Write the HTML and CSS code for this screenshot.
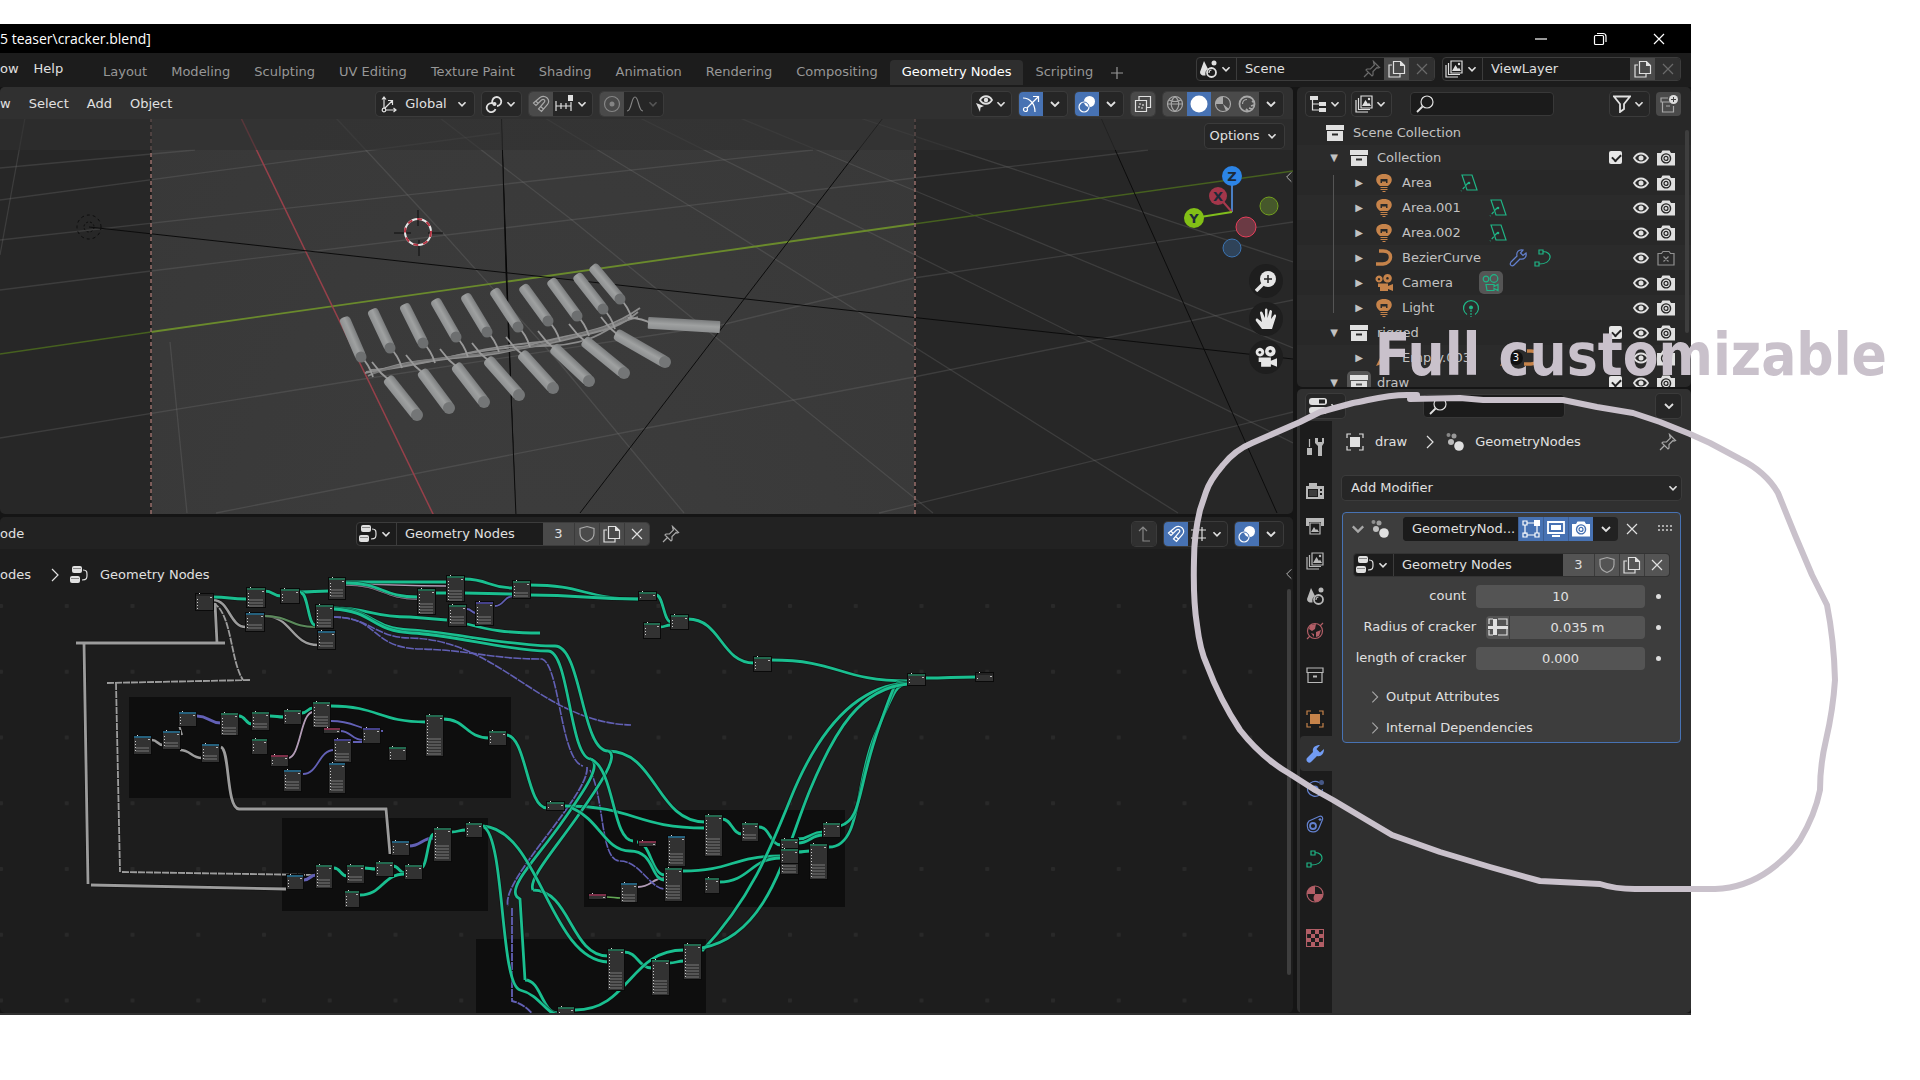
FILE: index.html
```html
<!DOCTYPE html>
<html lang="en">
<head>
<meta charset="UTF-8">
<title>cracker.blend</title>
<link rel="stylesheet" href="styles.css">
</head>
<body>

<!-- icon set -->
<svg class="defs" aria-hidden="true">
  <symbol id="down" viewBox="0 0 18 18"><path d="M5 7l4 4 4-4" class="l2"/></symbol>
  <symbol id="right" viewBox="0 0 18 18"><path d="M6 3l6 6-6 6" class="l"/></symbol>
  <symbol id="left" viewBox="0 0 18 18"><path d="M12 3L6 9l6 6" class="l"/></symbol>
  <symbol id="close" viewBox="0 0 18 18"><path d="M4 4l10 10M14 4L4 14" class="l"/></symbol>
  <symbol id="copy" viewBox="0 0 18 18"><path d="M4 5H1v12h11v-3M5.500 1.500h7l4 4v8h-11z" class="l"/><path d="M12 1v5h5z" class="f"/></symbol>
  <symbol id="pin" viewBox="0 0 18 18"><path d="M10.500 1.500l6 6-1.500.500-1-.500-4 4v3.500l-1 1-6-6 1-1h3.500l4-4-.500-1zM5.500 12.500L1 17" class="l"/></symbol>
  <symbol id="shield" viewBox="0 0 18 18"><path d="M9 1.500L16 3.500v5c0 4-3 6.500-7 8-4-1.500-7-4-7-8v-5z" class="l"/></symbol>
  <symbol id="scene" viewBox="0 0 18 18"><path d="M5 1L1 12c0 3 3 4 5.500 3.500C6 12 7 10 9 9z" class="f"/><circle cx="15" cy="3" r="2.500" class="f"/><circle cx="12.500" cy="12.500" r="4.500" class="l2"/><path d="M10 13c0-2 1-3 2.500-3" class="l"/></symbol>
  <symbol id="layers" viewBox="0 0 18 18"><path d="M1 5v12h12M3.500 3v11.500H15" class="l"/><path d="M6 1h11v12H6z" class="l"/><path d="M7 11l3.500-6 2.500 4 1-1.500L16 11z" class="f"/><circle cx="14" cy="4" r="1.200" class="f"/></symbol>
  <symbol id="axes" viewBox="0 0 18 18"><path d="M4 13V2M2 4.500L4 2l2 2.500M5 15h11M13.500 13l2.500 2-2.500 2M5 13l7-7M8 5.500h4.500V10" class="l"/><circle cx="4" cy="15" r="1.800" class="l"/></symbol>
  <symbol id="pivot" viewBox="0 0 18 18"><path d="M8 8.500a4.500 4.500 0 1 0 2.500 5.500M8 9a4.500 4.500 0 1 1 4 2" class="l2"/><circle cx="9.500" cy="9" r="2" class="f"/></symbol>
  <symbol id="magnet" viewBox="0 0 18 18"><path d="M1.500 8L8 2.500c5-3.500 11 2 7.500 7L9.500 16.500 6.500 14l6-7c1-2-1-3.500-3-2L4 10.500zM3.500 6l3 2.500M8.500 11.500l3 2.500" class="l"/></symbol>
  <symbol id="increment" viewBox="0 0 18 18"><path d="M1 6v10M6 8v6M11 8v6M16 7v9M1 11h15" class="l"/><path d="M13 0h5v6h-5z" class="f"/></symbol>
  <symbol id="proportional" viewBox="0 0 18 18"><circle cx="9" cy="9" r="7.500" class="l"/><circle cx="9" cy="9" r="2.500" class="f"/></symbol>
  <symbol id="falloff" viewBox="0 0 18 18"><path d="M1 16c5 0 4-14 8-14s3 14 8 14" class="l"/></symbol>
  <symbol id="visible" viewBox="0 0 18 18"><path d="M5 5c3-5 9-5 12 0-3 5-9 5-12 0z" class="l2"/><circle cx="11" cy="5" r="2.200" class="f"/><path d="M1 8l8 3-3.500 1.500L5 17z" class="f"/></symbol>
  <symbol id="gizmo" viewBox="0 0 18 18"><path d="M1 3c7 0 12 6 12 14M5 13L16 2M11 1.500h5.500V7" class="l"/><circle cx="3.500" cy="14.500" r="2" class="l"/></symbol>
  <symbol id="overlays" viewBox="0 0 18 18"><circle cx="11.500" cy="6.500" r="5.500" class="f"/><circle cx="6" cy="12" r="5" class="l"/><path d="M6 7a5 5 0 0 1 5 5" stroke="#4772b3" fill="none"/></symbol>
  <symbol id="xray" viewBox="0 0 18 18"><path d="M1.500 5.500h11v11h-11zM5 5V1.500h11.500v11H13" class="l"/><path d="M5 9h4v4H5z" class="l" stroke-dasharray="2 2"/></symbol>
  <symbol id="wire" viewBox="0 0 18 18"><circle cx="9" cy="9" r="7.500" class="l"/><path d="M1.500 9h15M9 1.500c-5 4-5 11 0 15M9 1.500c5 4 5 11 0 15M3 5c4 2 8 2 12 0" class="l"/></symbol>
  <symbol id="solid" viewBox="0 0 18 18"><circle cx="9" cy="9" r="8.500" class="f"/></symbol>
  <symbol id="matprev" viewBox="0 0 18 18"><circle cx="9" cy="9" r="7.500" class="l"/><path d="M9 1.500V9l6 5a7.500 7.500 0 0 1-3 2L9 9H1.500C1.500 5 5 1.500 9 1.500z" class="f"/></symbol>
  <symbol id="rendered" viewBox="0 0 18 18"><circle cx="9" cy="9" r="7.500" class="l2"/><path d="M4.500 9c0-3 2-4.500 4.500-4.500" class="l"/><path d="M14 7l1.500-1M13 11l3-1M11 13l3 1M8 14l2 2" class="l2"/></symbol>
  <symbol id="tree" viewBox="0 0 18 18"><path d="M1 1h8v4H1zM10 7h7v4h-7zM10 13h7v4h-7z" class="f"/><path d="M3.500 5v10H10M3.500 9H10" class="l"/></symbol>
  <symbol id="search" viewBox="0 0 18 18"><circle cx="11" cy="7" r="6" class="l"/><path d="M6.500 11.500L1 17" class="l2"/></symbol>
  <symbol id="filter" viewBox="0 0 18 18"><path d="M1 1.500h16L11 9v5l-4 3V9z" class="l2"/></symbol>
  <symbol id="newcol" viewBox="0 0 18 18"><path d="M8 3H1v4h9M2.500 7v10h11v-6M6 11h4" class="l"/><circle cx="13.500" cy="4.500" r="4.500" fill="#ddd"/><path d="M13.500 2v5M11 4.500h5" stroke="#444"/></symbol>
  <symbol id="box" viewBox="0 0 18 18"><path d="M0 1h18v5H0z" class="f"/><path fill-rule="evenodd" d="M1 7h16v10H1zM6 9.500h6v2H6z" class="f"/></symbol>
  <symbol id="boxline" viewBox="0 0 18 18"><path d="M1 2h16v4.500H1zM2 6.500h14V16.500H2z" class="l"/><path d="M7 9.500h4v2H7z" class="f"/></symbol>
  <symbol id="eye" viewBox="0 0 18 18"><path d="M2 9c3.500-6 10.500-6 14 0-3.500 6-10.500 6-14 0z" class="l2"/><circle cx="9" cy="9" r="2.500" class="f"/></symbol>
  <symbol id="cam" viewBox="0 0 18 18"><path fill-rule="evenodd" d="M0 4h4l1.500-2.500h7L14 4h4v12.500H0zM9 4.200a5.200 5.200 0 1 0 .1 0z" class="f"/><circle cx="9" cy="9.400" r="3.200" class="l"/><circle cx="9" cy="9.400" r="1.300" class="f"/></symbol>
  <symbol id="camoff" viewBox="0 0 18 18"><path d="M1 4.500h3.500l1.500-2h6l1.500 2H17v11.500H1zM6.500 7.500l5 5M11.500 7.500l-5 5" class="l"/></symbol>
  <symbol id="bulb" viewBox="0 0 18 18"><path fill-rule="evenodd" d="M9 0c9 0 10 8 4 12H5C-1 8 0 0 9 0zM5.500 5v4H7V7.500h4V9h1.500V5z" class="f"/><path d="M5.500 13.500h7M5.500 15.500h7M7.500 17.500h3" class="l"/></symbol>
  <symbol id="area" viewBox="0 0 18 18"><path d="M2 1h10l5 15H7z" class="l"/><path d="M8 9l-7 8" class="l" stroke-dasharray="3 2"/><circle cx="9" cy="9" r="1.300" class="f"/></symbol>
  <symbol id="curve" viewBox="0 0 18 18"><path d="M4 2h4c10 0 10 12 0 13H1" class="l4"/></symbol>
  <symbol id="curvedata" viewBox="0 0 18 18"><path d="M9 2.500c10 0 10 12.500-4 12.500M5 1h4v4H5zM1 13h4v4H1z" class="l"/></symbol>
  <symbol id="wrench" viewBox="0 0 18 18"><path d="M17 4l-3 2.500L11.500 4 14 1C10 0 7 3 8 7l-6 6c-2 3 1 5 3 3l6-6c4 1 7-2 6-6z" class="l"/></symbol>
  <symbol id="wrenchfill" viewBox="0 0 18 18"><path d="M18 4l-4 3.500L10.500 4 14 0C9 0 6 3 7 7l-6 6c-2 3 2 6 4 4l6-6c4 1 7-2 7-7z" class="f"/></symbol>
  <symbol id="movie" viewBox="0 0 18 18"><path fill-rule="evenodd" d="M4 1.500a3.500 3.500 0 1 0 .1 0zM4 4a1.200 1.200 0 1 1-.1 0zM12.500 0a4.300 4.300 0 1 0 .1 0zM12.500 3a1.300 1.300 0 1 1-.1 0z" class="f"/><path d="M3 9.500h10V12l5-2v7l-5-2v2H5v-4H3z" class="f"/></symbol>
  <symbol id="movieline" viewBox="0 0 18 18"><circle cx="4" cy="5" r="2.800" class="l"/><circle cx="12" cy="4.500" r="3.800" class="l"/><path d="M4 10.500h8v2l4-2v6l-4-2v2H5z" class="l"/></symbol>
  <symbol id="point" viewBox="0 0 18 18"><path d="M5 15.500a7.500 7.500 0 1 1 8 0" class="l"/><path d="M9 11v7" class="l" stroke-dasharray="2 1"/><circle cx="9" cy="8.500" r="2" class="f"/></symbol>
  <symbol id="bone" viewBox="0 0 18 18"><path d="M1 17l4-8 10-8-3 9-8 6z" class="f"/></symbol>
  <symbol id="toggles" viewBox="0 0 18 18"><rect x="0" y="1" width="18" height="7" rx="3" class="f"/><rect x="0" y="10" width="18" height="7" rx="3" class="f"/><path d="M10 2.500h6v4h-6z" fill="#222"/></symbol>
  <symbol id="tools" viewBox="0 0 18 18"><path d="M3.500 1v8" class="l"/><path d="M1 10h5v7H1z" class="f"/><path d="M9 0v5l3 3v10h4V8l2-3V0h-2v4h-4V0z" class="f"/></symbol>
  <symbol id="render" viewBox="0 0 18 18"><path fill-rule="evenodd" d="M0 4h3V1h8v3h7v13H0zM2 7v8h10V7zM14 7h2v2h-2zM14 11h2v2h-2z" class="f"/><path d="M3 9h8M3 11h8M3 13h8" class="l" opacity=".4"/></symbol>
  <symbol id="output" viewBox="0 0 18 18"><path d="M0 1h18v8h-3V5H3v4H0z" class="f"/><path d="M4 6h10v11H4z" class="l"/><path d="M5 15l3-5 2 3 1-1 2 3z" class="f"/></symbol>
  <symbol id="world" viewBox="0 0 18 18"><circle cx="9" cy="9" r="7.500" class="l"/><path d="M4 3l6-1-1 5-3 2-3-2zM10 10l5-2-2 6-3 1zM5 11l3 1v3z" class="f"/><path d="M1 17l3-3M14 4l3-3" class="l"/></symbol>
  <symbol id="object" viewBox="0 0 18 18"><path d="M4 4h10v10H4z" class="f"/><path d="M1 5V1h4M13 1h4v4M17 13v4h-4M5 17H1v-4" class="l"/></symbol>
  <symbol id="particles" viewBox="0 0 18 18"><circle cx="2.500" cy="2" r="2" class="f" opacity=".5"/><circle cx="8" cy="3" r="2.500" class="f" opacity=".6"/><circle cx="5" cy="9" r="3" class="f" opacity=".8"/><circle cx="13" cy="13" r="4.800" class="f"/></symbol>
  <symbol id="physics" viewBox="0 0 18 18"><path d="M13 2.500A7.500 7.500 0 1 0 16.500 9" class="l"/><circle cx="9" cy="9" r="3.500" class="f"/><circle cx="15.500" cy="2.500" r="2.500" class="f" opacity=".6"/></symbol>
  <symbol id="constraint" viewBox="0 0 18 18"><path d="M3 6l10-4.500c3-1 4 1 3.500 3L13 13c-2 5-9 5-11 1-1-3-1-6 1-8z" class="l"/><circle cx="7" cy="11" r="3" class="l2"/><path d="M14 3v3M12.500 4.500h3" class="l"/></symbol>
  <symbol id="material" viewBox="0 0 18 18"><circle cx="9" cy="9" r="8" class="l"/><path d="M9 1v8H1c0-4 4-8 8-8zM9 9h8c0 4-4 8-8 8-2-3-2-5 0-8z" class="f"/></symbol>
  <symbol id="texture" viewBox="0 0 18 18"><path d="M.5.500h17v17H.500z" class="l"/><path d="M1 1h4v4H1zM9 1h4v4H9zM5 5h4v4H5zM13 5h4v4h-4zM1 9h4v4H1zM9 9h4v4H9zM5 13h4v4H5zM13 13h4v4h-4z" class="f"/></symbol>
  <symbol id="nodes" viewBox="0 0 18 18"><rect x="2" y="0" width="10" height="7" rx="2" class="f"/><rect x="0" y="10" width="10" height="7" rx="2" class="f"/><path d="M3 2.500h8M1 12.500h8" stroke="#888"/><path d="M13 4c4 0 4 2 4 5s0 5-5 5" class="l"/></symbol>
  <symbol id="editmode" viewBox="0 0 18 18"><path d="M3 5v9M5 3h7M5 15h8M15 6v7M1 1h4v4H1zM1 13h4v4H1zM13 13h4v4h-4z" class="l"/><path d="M12 0h6v6h-6z" class="f"/></symbol>
  <symbol id="monitor" viewBox="0 0 18 18"><path d="M1 2h16v11H1z" class="l2"/><path d="M4 5h10v5H4zM5 15h8v2H5z" class="f"/></symbol>
  <symbol id="attribute" viewBox="0 0 20 18"><path d="M1 6V1h4M10 1h9v6M19 11v6h-9M5 17H1v-5" class="l"/><path d="M5 1h4v16H5zM0 8h20v3H0z" class="f"/></symbol>
  <symbol id="parent" viewBox="0 0 18 18"><path d="M15 16H8V2M4 6l4-4 4 4" class="l"/></symbol>
  <symbol id="snapgrid" viewBox="0 0 18 18"><path d="M5 2v14M12 2v14M1 5h15M1 13h15" class="l"/></symbol>
  <symbol id="zoom" viewBox="0 0 22 22"><circle cx="13" cy="9" r="8" class="f"/><path d="M8 14l-7 7" class="l4"/><path d="M13 5v8M9 9h8" stroke="#222" stroke-width="1.500"/></symbol>
  <symbol id="hand" viewBox="0 0 22 22"><path d="M7 21L1 13c-1-2 1-3 2-2l4 3-2-9c0-2 2-2 2.500-.5L10 10V2c0-2 2.500-2 2.500 0v8l2-7c.5-2 2.500-1 2.500.5L16 11l3-4c1-1 2.500 0 2 1.500L17 21z" class="f"/></symbol>
</svg>

<div class="app">
  <div class="titlebar">
    <span>5 teaser\cracker.blend]</span>
    <div class="window-buttons">
      <button aria-label="Minimize"><svg class="icon" viewBox="0 0 18 18"><path d="M3 9h12" class="l"/></svg></button>
      <button aria-label="Restore"><svg class="icon" viewBox="0 0 18 18"><rect x="3.500" y="5.500" width="9" height="9" rx="1" class="l"/><path d="M6 3.500h6a3 3 0 0 1 3 3V12" class="l"/></svg></button>
      <button aria-label="Close"><svg class="icon"><use href="#close"/></svg></button>
    </div>
  </div>

  <div class="topbar">
    <nav class="menu"><a href="#">ow</a><a href="#">Help</a></nav>
    <nav class="tabs">
      <a href="#">Layout</a><a href="#">Modeling</a><a href="#">Sculpting</a><a href="#">UV Editing</a><a href="#">Texture Paint</a><a href="#">Shading</a><a href="#">Animation</a><a href="#">Rendering</a><a href="#">Compositing</a><a href="#" class="active">Geometry Nodes</a><a href="#">Scripting</a>
      <button class="add-tab" aria-label="Add workspace"><svg class="icon" viewBox="0 0 18 18"><path d="M9 3v12M3 9h12" class="l"/></svg></button>
    </nav>
    <div class="id-block">
      <button class="pick" aria-label="Browse scene"><svg class="icon"><use href="#scene"/></svg><svg class="arrow"><use href="#down"/></svg></button>
      <input type="text" value="Scene" aria-label="Scene name">
      <button class="sq inside" aria-label="Pin"><svg class="icon dim"><use href="#pin"/></svg></button>
      <button class="sq grey" aria-label="New scene"><svg class="icon"><use href="#copy"/></svg></button>
      <button class="sq dark" aria-label="Unlink scene"><svg class="icon dim"><use href="#close"/></svg></button>
    </div>
    <div class="id-block">
      <button class="pick" aria-label="Browse view layer"><svg class="icon"><use href="#layers"/></svg><svg class="arrow"><use href="#down"/></svg></button>
      <input type="text" value="ViewLayer" aria-label="View layer name">
      <button class="sq grey" aria-label="New view layer"><svg class="icon"><use href="#copy"/></svg></button>
      <button class="sq dark" aria-label="Remove view layer"><svg class="icon dim"><use href="#close"/></svg></button>
    </div>
  </div>

  <div class="workspace">
    <!-- 3D viewport -->
    <section class="viewport">
      <svg class="canvas" id="scene3d" viewBox="0 87 1293 427" preserveAspectRatio="xMinYMin slice">
        <defs>
          <linearGradient id="tube" x1="0" x2="1" y1="0" y2="0"><stop offset="0" stop-color="#8d8f90"/><stop offset=".5" stop-color="#9fa1a1"/><stop offset="1" stop-color="#7b7d7e"/></linearGradient>
          <radialGradient id="back" cx=".5" cy=".5" r=".7"><stop offset="0" stop-color="#3d3d3d"/><stop offset="1" stop-color="#383838"/></radialGradient>
        </defs>
        <rect x="0" y="87" width="2600" height="1200" fill="#272727"/>
        <rect x="151" y="87" width="764" height="1200" fill="url(#back)"/>
        <g class="grid3d">
          <path d="M0 168L195 150M0 200L500 133M0 240L813 150M0 290L151 271L914 178L1148 150M0 438L357 380L721 325L914 278L1293 222M216 513L647 428L914 377L1293 300M879 513L1293 412"/>
          <path d="M336 118L443 233L557 360L684 513M440 118L572 220L740 357L933 513M545 118L713 220L1178 513M640 118L1293 443M740 118L1293 348M860 118L1293 262M170 342L187 513M25 118L0 255"/>
        </g>
        <path d="M0 354L151 332M914 224L1293 171" stroke="#46601f" stroke-width="1.500"/>
        <path d="M151 332L914 224" stroke="#6a8a2c" stroke-width="1.800"/>
        <path d="M226 87L434 516" stroke="#97404a" stroke-width="1.500"/>
        <path d="M89 227L1293 359M501 100L506 272L516 516M883 118L580 513M1101 118L1277 513" stroke="#0c0c0c"/>
        <path d="M151 118V516M915 118V516" stroke="#111"/>
        <path d="M151 118V516M915 118V516" stroke="#d99a94" stroke-dasharray="4 3"/>
        <g fill="none" stroke="#0d0d0d"><circle cx="89" cy="227" r="5" stroke-dasharray="2 2"/><circle cx="89" cy="227" r="12" stroke-dasharray="3 3"/></g>
        <path d="M394 233h17M428 233h15M418 210v16M419 240v16" stroke="#0d0d0d"/>
        <circle cx="418" cy="232" r="13" fill="none" stroke="#e8e8e8" stroke-width="2"/>
        <circle cx="418" cy="232" r="13" fill="none" stroke="#b53342" stroke-width="2" stroke-dasharray="5 5"/>
        <g id="rope" fill="none" stroke="#8c8c8c" stroke-width="1.800">
          <path d="M365 373C430 358 500 355 560 341S620 326 638 312"/>
          <path d="M368 376C410 352 470 364 520 348S600 336 640 308"/>
          <path d="M371 370C420 366 480 346 540 346S610 324 632 316"/>
          <path d="M366 372C440 364 460 350 530 343S600 328 638 317"/>
          <path d="M372 374C430 352 480 360 550 342S600 330 628 318" stroke="#777"/>
          <path d="M628 318q15 0 24 6" stroke="#999"/>
        </g>
        <g id="tubes"></g>
      </svg>
      <header class="bar">
        <nav class="menu"><a href="#">w</a><a href="#">Select</a><a href="#">Add</a><a href="#">Object</a></nav>
        <button class="drop orient"><svg class="icon"><use href="#axes"/></svg><span>Global</span><svg class="arrow"><use href="#down"/></svg></button>
        <button class="drop" aria-label="Pivot"><svg class="icon"><use href="#pivot"/></svg><svg class="arrow"><use href="#down"/></svg></button>
        <div class="set"><button class="sq grey" aria-label="Snap"><svg class="icon soft"><use href="#magnet"/></svg></button><button class="pick" aria-label="Snap to"><svg class="icon"><use href="#increment"/></svg><svg class="arrow"><use href="#down"/></svg></button></div>
        <div class="set faded"><button class="sq grey" aria-label="Proportional"><svg class="icon"><use href="#proportional"/></svg></button><button class="pick" aria-label="Falloff"><svg class="icon"><use href="#falloff"/></svg><svg class="arrow"><use href="#down"/></svg></button></div>
        <div class="push"></div>
        <button class="drop" aria-label="Visibility"><svg class="icon"><use href="#visible"/></svg><svg class="arrow"><use href="#down"/></svg></button>
        <div class="set"><button class="sq on" aria-label="Gizmos"><svg class="icon"><use href="#gizmo"/></svg></button><button class="sq" aria-label="Gizmo options"><svg class="icon"><use href="#down"/></svg></button></div>
        <div class="set"><button class="sq on" aria-label="Overlays"><svg class="icon"><use href="#overlays"/></svg></button><button class="sq" aria-label="Overlay options"><svg class="icon"><use href="#down"/></svg></button></div>
        <div class="set"><button class="sq grey" aria-label="X-ray"><svg class="icon"><use href="#xray"/></svg></button></div>
        <div class="set"><button class="sq grey" aria-label="Wireframe"><svg class="icon soft"><use href="#wire"/></svg></button><button class="sq on" aria-label="Solid"><svg class="icon"><use href="#solid"/></svg></button><button class="sq grey" aria-label="Material preview"><svg class="icon soft"><use href="#matprev"/></svg></button><button class="sq grey" aria-label="Rendered"><svg class="icon soft"><use href="#rendered"/></svg></button><button class="sq" aria-label="Shading options"><svg class="icon"><use href="#down"/></svg></button></div>
      </header>
      <div class="toolrow"><button class="drop options"><span>Options</span><svg class="arrow"><use href="#down"/></svg></button></div>
      <svg class="gizmo" viewBox="0 0 100 100">
        <path d="M50 43V8" stroke="#4a7fc4" stroke-width="2"/><path d="M50 43L36 27" stroke="#a83a4e" stroke-width="2"/><path d="M50 43L12 49" stroke="#80bd1c" stroke-width="2"/>
        <circle cx="50" cy="7" r="10" fill="#2c84e6"/><circle cx="36" cy="27" r="9" fill="#a3364a"/><circle cx="12" cy="49" r="10" fill="#82bf16"/>
        <circle cx="87" cy="37" r="9" fill="#46582b" stroke="#73a01f"/><circle cx="64" cy="58" r="10" fill="#6b3a44" stroke="#e83f5b"/><circle cx="50" cy="79" r="9" fill="#2f4359" stroke="#3d76b5"/>
        <text x="50" y="12">Z</text><text x="36" y="32">X</text><text x="12" y="54">Y</text>
      </svg>
      <div class="nav-buttons">
        <button aria-label="Zoom"><svg><use href="#zoom"/></svg></button>
        <button aria-label="Pan"><svg><use href="#hand"/></svg></button>
        <button aria-label="Camera view"><svg><use href="#movie"/></svg></button>
      </div>
      <svg class="side-toggle"><use href="#left"/></svg>
    </section>

    <!-- geometry node editor -->
    <section class="node-editor">
      <svg class="canvas" id="graph" viewBox="0 517 1293 497" preserveAspectRatio="xMinYMin slice">
        <defs><pattern id="dots" x="-1" y="604" width="65.750" height="65.750" patternUnits="userSpaceOnUse"><rect width="4" height="4" rx="1" fill="#292929"/></pattern></defs>
        <rect x="0" y="517" width="2600" height="1200" fill="#1d1d1d"/>
        <rect x="0" y="560" width="1280" height="900" fill="url(#dots)"/>
        <g id="frames"></g><g id="links" fill="none"></g><g id="node-list"></g>
      </svg>
      <header class="bar">
        <nav class="menu"><a href="#">ode</a></nav>
        <div class="id-block tree">
          <button class="pick" aria-label="Browse node tree"><svg class="icon"><use href="#nodes"/></svg><svg class="arrow"><use href="#down"/></svg></button>
          <input type="text" value="Geometry Nodes" aria-label="Node tree name">
          <button class="users grey">3</button>
          <button class="sq grey" aria-label="Fake user"><svg class="icon soft"><use href="#shield"/></svg></button>
          <button class="sq grey" aria-label="New tree"><svg class="icon"><use href="#copy"/></svg></button>
          <button class="sq grey" aria-label="Unlink tree"><svg class="icon"><use href="#close"/></svg></button>
        </div>
        <button class="sq plain" aria-label="Pin"><svg class="icon soft"><use href="#pin"/></svg></button>
        <div class="push"></div>
        <div class="set faded"><button class="sq dark" aria-label="Parent tree"><svg class="icon"><use href="#parent"/></svg></button></div>
        <div class="set snap"><button class="sq on" aria-label="Snap"><svg class="icon"><use href="#magnet"/></svg></button><button class="pick" aria-label="Snap to"><svg class="icon"><use href="#snapgrid"/></svg><svg class="arrow"><use href="#down"/></svg></button></div>
        <div class="set"><button class="sq on" aria-label="Overlays"><svg class="icon"><use href="#overlays"/></svg></button><button class="sq" aria-label="Overlay options"><svg class="icon"><use href="#down"/></svg></button></div>
      </header>
      <div class="crumbs"><span>odes</span><svg class="icon"><use href="#right"/></svg><svg class="icon"><use href="#nodes"/></svg><span>Geometry Nodes</span></div>
      <svg class="side-toggle"><use href="#left"/></svg>
      <div class="scroll"></div>
    </section>

    <!-- outliner -->
    <section class="outliner">
      <header class="bar">
        <button class="drop" aria-label="Editor type"><svg class="icon"><use href="#tree"/></svg><svg class="arrow"><use href="#down"/></svg></button>
        <button class="drop" aria-label="Display mode"><svg class="icon"><use href="#layers"/></svg><svg class="arrow"><use href="#down"/></svg></button>
        <label class="search"><svg class="icon"><use href="#search"/></svg><input type="text" aria-label="Search outliner"></label>
        <button class="drop" aria-label="Filter"><svg class="icon"><use href="#filter"/></svg><svg class="arrow"><use href="#down"/></svg></button>
        <button class="sq grey" aria-label="New collection"><svg class="icon soft"><use href="#newcol"/></svg></button>
      </header>
      <ul class="rows">
        <li><i class="tri"></i><svg class="icon"><use href="#box"/></svg><span>Scene Collection</span></li>
        <li class="d1"><i class="tri">▼</i><svg class="icon"><use href="#box"/></svg><span>Collection</span><div class="flags"><input type="checkbox" checked aria-label="Enable Collection"><svg class="icon"><use href="#eye"/></svg><svg class="icon"><use href="#cam"/></svg></div></li>
        <li class="d2"><i class="tri">▶</i><svg class="icon orange"><use href="#bulb"/></svg><span>Area</span><svg class="icon green"><use href="#area"/></svg><div class="flags"><svg class="icon"><use href="#eye"/></svg><svg class="icon"><use href="#cam"/></svg></div></li>
        <li class="d2"><i class="tri">▶</i><svg class="icon orange"><use href="#bulb"/></svg><span>Area.001</span><svg class="icon green"><use href="#area"/></svg><div class="flags"><svg class="icon"><use href="#eye"/></svg><svg class="icon"><use href="#cam"/></svg></div></li>
        <li class="d2"><i class="tri">▶</i><svg class="icon orange"><use href="#bulb"/></svg><span>Area.002</span><svg class="icon green"><use href="#area"/></svg><div class="flags"><svg class="icon"><use href="#eye"/></svg><svg class="icon"><use href="#cam"/></svg></div></li>
        <li class="d2"><i class="tri">▶</i><svg class="icon orange"><use href="#curve"/></svg><span>BezierCurve</span><svg class="icon blue"><use href="#wrench"/></svg><svg class="icon green"><use href="#curvedata"/></svg><div class="flags"><svg class="icon"><use href="#eye"/></svg><svg class="icon soft"><use href="#camoff"/></svg></div></li>
        <li class="d2"><i class="tri">▶</i><svg class="icon orange"><use href="#movie"/></svg><span>Camera</span><b class="chip"><svg class="icon green"><use href="#movieline"/></svg></b><div class="flags"><svg class="icon"><use href="#eye"/></svg><svg class="icon"><use href="#cam"/></svg></div></li>
        <li class="d2"><i class="tri">▶</i><svg class="icon orange"><use href="#bulb"/></svg><span>Light</span><svg class="icon green"><use href="#point"/></svg><div class="flags"><svg class="icon"><use href="#eye"/></svg><svg class="icon"><use href="#cam"/></svg></div></li>
        <li class="d1"><i class="tri">▼</i><svg class="icon"><use href="#box"/></svg><span>rigged</span><div class="flags"><input type="checkbox" checked aria-label="Enable rigged"><svg class="icon"><use href="#eye"/></svg><svg class="icon"><use href="#cam"/></svg></div></li>
        <li class="d2"><i class="tri">▶</i><svg class="icon orange"><use href="#bone"/></svg><span>Empty.003</span><svg class="icon orange"><use href="#bone"/></svg><em class="count">3</em><svg class="icon orange"><use href="#curve"/></svg><div class="flags"><svg class="icon"><use href="#eye"/></svg><svg class="icon"><use href="#cam"/></svg></div></li>
        <li class="d1"><i class="tri">▼</i><b class="chip"><svg class="icon"><use href="#box"/></svg></b><span>draw</span><div class="flags"><input type="checkbox" checked aria-label="Enable draw"><svg class="icon"><use href="#eye"/></svg><svg class="icon"><use href="#cam"/></svg></div></li>
      </ul>
      <div class="guide"></div>
      <div class="scroll"></div>
    </section>

    <!-- properties -->
    <section class="properties">
      <header class="bar">
        <button class="drop" aria-label="Editor type"><svg class="icon"><use href="#toggles"/></svg><svg class="arrow"><use href="#down"/></svg></button>
        <label class="search"><svg class="icon"><use href="#search"/></svg><input type="text" aria-label="Search properties"></label>
        <button class="drop small" aria-label="Options"><svg class="icon"><use href="#down"/></svg></button>
      </header>
      <div class="props-body">
        <nav class="side-tabs">
          <a href="#" aria-label="Tool"><svg class="icon"><use href="#tools"/></svg></a>
          <a href="#" class="gap" aria-label="Render"><svg class="icon"><use href="#render"/></svg></a>
          <a href="#" aria-label="Output"><svg class="icon"><use href="#output"/></svg></a>
          <a href="#" aria-label="View layer"><svg class="icon"><use href="#layers"/></svg></a>
          <a href="#" aria-label="Scene"><svg class="icon"><use href="#scene"/></svg></a>
          <a href="#" aria-label="World"><svg class="icon red"><use href="#world"/></svg></a>
          <a href="#" class="gap" aria-label="Collection"><svg class="icon"><use href="#boxline"/></svg></a>
          <a href="#" class="gap" aria-label="Object"><svg class="icon orange"><use href="#object"/></svg></a>
          <a href="#" class="active" aria-label="Modifiers"><svg class="icon"><use href="#wrenchfill"/></svg></a>
          <a href="#" aria-label="Physics"><svg class="icon blue"><use href="#physics"/></svg></a>
          <a href="#" aria-label="Constraints"><svg class="icon blue"><use href="#constraint"/></svg></a>
          <a href="#" aria-label="Data"><svg class="icon green"><use href="#curvedata"/></svg></a>
          <a href="#" aria-label="Material"><svg class="icon red"><use href="#material"/></svg></a>
          <a href="#" class="gap" aria-label="Texture"><svg class="icon red"><use href="#texture"/></svg></a>
        </nav>
        <div class="panel-area">
          <div class="path"><svg class="icon"><use href="#object"/></svg><span>draw</span><svg class="icon"><use href="#right"/></svg><svg class="icon"><use href="#particles"/></svg><span>GeometryNodes</span><svg class="icon soft pin"><use href="#pin"/></svg></div>
          <button class="drop add-modifier"><span>Add Modifier</span><svg class="arrow"><use href="#down"/></svg></button>
          <div class="modifier">
            <div class="mod-head">
              <svg class="icon soft wide"><use href="#down"/></svg><svg class="icon"><use href="#particles"/></svg>
              <div class="mod-name"><input type="text" value="GeometryNod..." aria-label="Modifier name"><button class="sq on" aria-label="Edit mode"><svg class="icon"><use href="#editmode"/></svg></button><button class="sq on" aria-label="Realtime"><svg class="icon"><use href="#monitor"/></svg></button><button class="sq on" aria-label="Render"><svg class="icon"><use href="#cam"/></svg></button><button class="sq" aria-label="More"><svg class="icon"><use href="#down"/></svg></button></div>
              <button class="sq plain" aria-label="Remove modifier"><svg class="icon"><use href="#close"/></svg></button>
              <i class="grip"></i>
            </div>
            <div class="id-block">
              <button class="pick" aria-label="Browse node group"><svg class="icon"><use href="#nodes"/></svg><svg class="arrow"><use href="#down"/></svg></button>
              <input type="text" value="Geometry Nodes" aria-label="Node group name">
              <button class="users grey">3</button>
              <button class="sq grey" aria-label="Fake user"><svg class="icon soft"><use href="#shield"/></svg></button>
              <button class="sq grey" aria-label="New group"><svg class="icon"><use href="#copy"/></svg></button>
              <button class="sq grey" aria-label="Unlink group"><svg class="icon"><use href="#close"/></svg></button>
            </div>
            <div class="prop"><label for="count">count</label><input type="text" id="count" value="10"><i class="dot"></i></div>
            <div class="prop attr"><label for="radius">Radius of cracker</label><button aria-label="Use attribute"><svg><use href="#attribute"/></svg></button><input type="text" id="radius" value="0.035 m"><i class="dot"></i></div>
            <div class="prop"><label for="length">length of cracker</label><input type="text" id="length" value="0.000"><i class="dot"></i></div>
            <button class="sub"><svg class="icon soft"><use href="#right"/></svg>Output Attributes</button>
            <button class="sub"><svg class="icon soft"><use href="#right"/></svg>Internal Dependencies</button>
          </div>
        </div>
      </div>
    </section>
  </div>
</div>

<!-- hand-drawn annotation -->
<svg class="scribble" viewBox="0 0 1920 1080" preserveAspectRatio="xMinYMin meet">
  <path d="M1417 395L1407 395C1385 395 1370 400 1353 403L1320 412L1300 422L1252 443Q1235 450 1223 465Q1210 480 1206 492L1200 510Q1194 535 1194 560Q1193 600 1197 625Q1200 650 1207 665Q1220 700 1240 730Q1262 758 1290 774L1315 790L1333 800L1370 822L1392 835L1440 852L1490 867L1540 881L1600 884Q1615 889 1635 889L1715 889Q1745 888 1770 870Q1790 855 1800 840Q1815 815 1820 790Q1820 765 1826 740Q1833 710 1835 680Q1834 640 1827 605L1812 575L1795 535L1778 493Q1766 472 1740 459L1710 443L1690 434L1660 422L1633 413L1597 407L1563 400L1483 400L1460 398L1410 399"/>
</svg>
<p class="caption">Full customizable</p>

<script src="scene.js"></script>
</body>
</html>
```

FILE: styles.css
```css
* {
  box-sizing: border-box;
}
body {
  margin: 0;
  background: #fff;
  color: #e0e0e0;
  font: 13px/18px "DejaVu Sans", sans-serif;
  position: relative;
  overflow: hidden;
}
a {
  color: inherit;
  text-decoration: none;
}
button, input {
  font: inherit;
  color: inherit;
  background: none;
  border: 0;
  margin: 0;
  padding: 0;
  min-width: 0;
}
button {
  display: flex;
  align-items: center;
  justify-content: center;
  cursor: pointer;
}
.defs {
  position: absolute;
  width: 0;
  height: 0;
}
.l, .l2, .l4 {
  fill: none;
  stroke: currentColor;
  stroke-width: 1.2;
}
.l2 {
  stroke-width: 1.8;
}
.l4 {
  stroke-width: 3.5;
}
.f {
  fill: currentColor;
}
.icon {
  width: 18px;
  height: 18px;
  flex: none;
}
.arrow {
  width: 16px;
  height: 16px;
  flex: none;
}
.dim { color: #6a6a6a; }
.soft { color: #a8a8a8; }
.orange { color: #c6834a; }
.green { color: #1fb586; }
.blue { color: #6381cf; }
.red { color: #b25e66; }

/* window */
.app {
  margin: 24px 229px 0 0;
  height: calc(100vh - 89px);
  min-height: 900px;
  display: flex;
  flex-direction: column;
  background: #151515;
  border-bottom: 2px solid #303030;
}
.titlebar {
  flex: none;
  height: 29px;
  background: #000;
  color: #fff;
  display: flex;
  align-items: center;
  justify-content: space-between;
  font: 14px/20px "Open Sans", sans-serif;
}
.window-buttons {
  display: flex;
  padding-right: 3px;
}
.window-buttons button {
  width: 59px;
}
.topbar {
  flex: none;
  height: 34px;
  padding-bottom: 1px;
  display: flex;
  background: #1c1c1c;
}
.topbar .menu {
  width: 91px;
  padding-top: 7px;
  display: flex;
  gap: 15px;
}
.tabs {
  flex: 1;
  display: flex;
  padding-top: 7px;
  color: #979797;
  white-space: nowrap;
}
.tabs a {
  height: 25px;
  padding: 3px 12px;
  border-radius: 4px 4px 0 0;
}
.tabs .active {
  background: #2e2e2e;
  color: #fff;
}
.add-tab {
  width: 24px;
  height: 25px;
}

/* shared controls */
.id-block {
  display: flex;
  height: 24px;
  background: #1c1c1c;
  border: 1px solid #3c3c3c;
  border-radius: 4px;
  overflow: hidden;
}
.topbar .id-block {
  width: 239px;
  margin: 4px 0 0 7px;
}
.topbar .id-block:last-child {
  margin-right: 10px;
}
.id-block input {
  flex: 1;
  padding-left: 8px;
  border-left: 1px solid #3c3c3c;
}
.pick {
  width: 39px;
  gap: 1px;
}
.sq {
  width: 25px;
  flex: none;
}
.grey { background: #4a4a4a; }
.dark { background: #303030; }
.on {
  background: #4772b3;
  color: #fff;
}
.users {
  width: 31px;
}
.users ~ .sq {
  border-left: 1px solid #3a3a3a;
}
.drop, .set {
  height: 24px;
  background: #262626;
  border-radius: 4px;
  box-shadow: 0 0 0 1px #3b3b3b;
  flex: none;
  overflow: hidden;
}
.drop {
  width: 39px;
}
.set {
  display: flex;
}
.set .sq {
  width: 24px;
}
.faded svg { color: #858585; }
.faded .arrow { color: #555; }
.bar {
  position: relative;
  display: flex;
  align-items: center;
  gap: 8px;
  height: 32px;
  padding-top: 1px;
}
.push { flex: 1; }
.search {
  display: flex;
  align-items: center;
  height: 24px;
  background: #1b1b1b;
  border: 1px solid #383838;
  border-radius: 4px;
  padding-left: 5px;
}
.search input {
  width: 100%;
}

/* areas */
.workspace {
  flex: 1;
  min-height: 0;
  display: grid;
  grid-template-columns: 1fr 394px;
  grid-template-rows: 300fr 128fr 498fr;
  grid-template-areas: "view out" "view props" "nodes props";
  gap: 0 4px;
}
.viewport, .node-editor, .outliner, .properties {
  position: relative;
  overflow: hidden;
  min-height: 0;
  border-radius: 5px;
}
.viewport { grid-area: view; margin-bottom: 1px; }
.node-editor { grid-area: nodes; margin-top: 2px; }
.outliner { grid-area: out; background: #282828; }
.properties { grid-area: props; background: #303030; margin-top: 2px; display: flex; flex-direction: column; }
.canvas {
  position: absolute;
  inset: 0;
  width: 100%;
  height: 100%;
}
.viewport .bar, .node-editor .bar {
  padding-right: 10px;
}
.viewport .bar {
  background: #303030;
}
.node-editor .bar {
  background: #222;
}
.viewport .menu {
  width: 368px;
  display: flex;
  gap: 18px;
}
.orient {
  width: 98px;
  gap: 7px;
}
.toolrow {
  position: relative;
  height: 31px;
  display: flex;
  justify-content: flex-end;
  padding: 5px 9px 0 0;
  background: rgba(48, 48, 48, 0.6);
}
.options {
  width: 79px;
  gap: 4px;
}
.grid3d {
  fill: none;
  stroke: #808080;
  stroke-opacity: 0.25;
  stroke-width: 1.3;
}
.gizmo {
  position: absolute;
  right: 11px;
  top: 82px;
  width: 100px;
  height: 100px;
  overflow: visible;
}
.gizmo text {
  font-size: 13px;
  font-weight: bold;
  text-anchor: middle;
  fill: #1d2a38;
}
.nav-buttons {
  position: absolute;
  right: 10px;
  top: 177px;
  display: grid;
  gap: 4px;
}
.nav-buttons button {
  width: 34px;
  height: 34px;
  border-radius: 50%;
  background: #1e1e1e;
  color: #e6e6e6;
}
.nav-buttons svg {
  width: 22px;
  height: 22px;
}
.side-toggle {
  position: absolute;
  right: -3px;
  top: 83px;
  width: 14px;
  height: 14px;
  color: #bbb;
}
.node-editor .side-toggle {
  top: 50px;
}
.node-editor .menu {
  width: 348px;
}
.tree {
  width: 294px;
}
.plain {
  background: none;
}
.crumbs {
  position: relative;
  display: flex;
  align-items: center;
  gap: 12px;
  margin-top: 17px;
}
.crumbs svg + svg {
  margin-left: -6px;
}
.crumbs span:first-child {
  margin-right: 3px;
}
.scroll {
  position: absolute;
  width: 4px;
  right: 2px;
  border-radius: 2px;
  background: #3e3e3e;
}
.node-editor .scroll {
  top: 72px;
  bottom: 38px;
}
.outliner .scroll {
  top: 43px;
  height: 203px;
}

/* outliner */
.outliner .bar {
  height: 33px;
  padding: 0 10px 0 9px;
  gap: 7px;
}
.outliner .search {
  width: 144px;
  margin: 0 auto 0 12px;
}
.outliner .bar .sq {
  height: 24px;
  border-radius: 4px;
}
.rows {
  list-style: none;
  margin: 0;
  padding: 0;
  color: #c2c2c2;
}
.rows li {
  height: 25px;
  display: flex;
  align-items: center;
  padding: 0 16px 0 5px;
}
.rows li:nth-child(even) {
  background: #2b2b2b;
}
.rows li > span {
  margin-left: 9px;
}
.rows .d1 { padding-left: 29px; }
.rows .d2 { padding-left: 54px; }
.tri {
  width: 16px;
  margin-right: 8px;
  text-align: center;
  font-size: 10px;
  font-style: normal;
  flex: none;
}
.rows .icon {
  color: #e0e0e0;
}
.rows .orange { color: #c6834a; }
.rows .green { color: #1fb586; }
.rows .blue { color: #6381cf; }
.rows .soft { color: #909090; }
.rows span + .icon {
  margin-left: 28px;
}
.rows .blue + .icon {
  margin-left: 7px;
}
.flags {
  margin-left: auto;
  display: flex;
  align-items: center;
  gap: 7px;
}
.flags input {
  appearance: none;
  width: 13px;
  height: 13px;
  margin-right: 3px;
  background: #e6e6e6;
  border-radius: 2px;
  position: relative;
}
.flags input::after {
  content: "";
  position: absolute;
  left: 3px;
  top: 3px;
  width: 7px;
  height: 4px;
  border-left: 2px solid #222;
  border-bottom: 2px solid #222;
  transform: rotate(-45deg);
}
.chip {
  width: 24px;
  height: 23px;
  display: flex;
  align-items: center;
  justify-content: center;
  border-radius: 5px;
  background: #555;
  margin: 0 -3px;
}
.rows span + .chip {
  margin-left: 26px;
}
.count {
  width: 14px;
  height: 14px;
  margin-left: -8px;
  border-radius: 50%;
  background: #111;
  color: #fff;
  font: 10px/14px "DejaVu Sans", sans-serif;
  text-align: center;
}
.guide {
  position: absolute;
  left: 36px;
  top: 88px;
  width: 1px;
  height: 138px;
  background: #555;
}

/* properties */
.properties .bar {
  flex: none;
  padding: 1px 10px 0 9px;
}
.properties .search {
  width: 142px;
  margin: 0 auto 0 70px;
}
.small {
  width: 25px;
}
.props-body {
  flex: 1;
  display: flex;
}
.side-tabs {
  width: 32px;
  margin-left: 3px;
  padding-top: 8px;
  background: #1c1c1c;
}
.side-tabs a {
  height: 35px;
  display: flex;
  align-items: center;
  padding-left: 6px;
  color: #b8b8b8;
}
.side-tabs .gap {
  margin-top: 9px;
}
.side-tabs .active {
  background: #303030;
  color: #729cf4;
  border-radius: 4px 0 0 4px;
}
.panel-area {
  flex: 1;
  min-width: 0;
  padding: 12px 10px 0 10px;
}
.path {
  display: flex;
  align-items: center;
  padding: 0 4px;
  gap: 11px;
}
.path svg + svg {
  margin-left: -4px;
}
.path span + svg:not(.pin) {
  margin-left: 3px;
}
.path .pin {
  margin-left: auto;
}
.add-modifier {
  width: 100%;
  margin: 25px 0 12px;
  padding: 0 0 0 9px;
  justify-content: space-between;
}
.modifier {
  height: 231px;
  padding: 4px 10px 0;
  background: #3d3d3d;
  border: 1px solid #4772b3;
  border-radius: 4px;
}
.mod-head {
  display: flex;
  align-items: center;
  margin: 0 0 12px -4px;
}
.wide {
  transform: scale(1.3);
}
.mod-head > .icon + .icon {
  margin: 0 14px 0 4px;
}
.mod-name {
  display: flex;
  width: 215px;
  height: 24px;
  background: #222;
  border-radius: 4px;
  overflow: hidden;
}
.mod-name input {
  flex: 1;
  padding-left: 9px;
  background: #1b1b1b;
}
.mod-name .on {
  border-left: 1px solid #3d5f94;
}
.mod-head .plain {
  margin-left: 1px;
}
.grip {
  width: 15px;
  height: 8px;
  margin-left: auto;
  margin-right: -3px;
  background: radial-gradient(circle at 1px 1px, #aaa 1px, transparent 1px) 0 0 / 4px 4px;
}
.modifier .id-block {
  margin-bottom: 7px;
  border-color: #333;
}
.modifier .grey {
  background: #545454;
}
.prop {
  display: flex;
  align-items: center;
  height: 24px;
  margin-bottom: 7px;
}
.prop label {
  width: 113px;
  margin-right: 10px;
  text-align: right;
  white-space: nowrap;
}
.prop input {
  flex: 1;
  height: 23px;
  background: #545454;
  border-radius: 4px;
  text-align: center;
}
.attr label {
  width: 123px;
}
.attr button {
  width: 23px;
  height: 23px;
  margin-right: 1px;
  background: #545454;
  border-radius: 4px 0 0 4px;
}
.attr button svg {
  width: 20px;
  height: 18px;
}
.attr input {
  border-radius: 0 4px 4px 0;
}
.dot {
  width: 5px;
  height: 5px;
  margin: 0 9px 0 11px;
  border-radius: 50%;
  background: #ddd;
}
.sub {
  height: 24px;
  margin: 15px 0 0 14px;
}
.sub .icon {
  width: 16px;
  height: 16px;
  margin-right: 3px;
}
.sub + .sub {
  margin-top: 7px;
}

/* annotation */
.scribble {
  position: absolute;
  left: 0;
  top: 0;
  width: 100vw;
  pointer-events: none;
}
.scribble path {
  fill: none;
  stroke: #c9c1cb;
  stroke-width: 6;
  stroke-linejoin: round;
  stroke-linecap: round;
}
.caption {
  position: absolute;
  right: 33px;
  top: 326px;
  margin: 0;
  color: #c9c1cb;
  font: bold 58px/58px "DejaVu Sans Condensed", "DejaVu Sans", sans-serif;
  white-space: nowrap;
  pointer-events: none;
}
```

FILE: scene.js
```js
var NS = 'http://www.w3.org/2000/svg';

function add(parent, tag, attrs) {
    var el = document.createElementNS(NS, tag);
    for (var k in attrs) el.setAttribute(k, attrs[k]);
    document.getElementById(parent).appendChild(el);
}

// crackers: start x, y, end x, y
var tubes = [
    [345,320,361,357],[373,312,390,348],[405,307,423,343],[436,302,456,337],[466,297,487,332],
    [495,292,518,327],[524,288,548,321],[552,282,577,316],[578,277,603,309],[594,268,620,299],
    [389,380,417,415],[423,373,449,408],[457,367,484,402],[489,361,519,395],[523,355,553,388],
    [555,349,589,381],[586,342,624,373],[618,335,665,362],[651,323,719,327]
];
tubes.forEach(function (t, i) {
    var dx = t[2] - t[0], dy = t[3] - t[1];
    var len = Math.sqrt(dx * dx + dy * dy);
    var angle = Math.atan2(dy, dx) * 180 / Math.PI - 90;
    // string to the rope
    if (i < 10) add('rope', 'path', {d: 'M' + t[2] + ' ' + t[3] + 'q8 7 12 20', stroke: '#999'});
    else if (i < 18) add('rope', 'path', {d: 'M' + t[0] + ' ' + t[1] + 'l-8 -7l-9 -11', stroke: '#999'});
    var w = i < 10 ? 11 : 12;
    var move = 'translate(' + t[0] + ' ' + t[1] + ') rotate(' + angle + ')';
    add('tubes', 'rect', {x: -w / 2, y: -3, width: w, height: len + 4, rx: i === 18 ? 1 : 4, fill: 'url(#tube)', transform: move});
    if (i < 18) add('tubes', 'ellipse', {cx: t[2], cy: t[3], rx: w / 2, ry: w / 2, fill: i < 10 ? '#6d6f70' : '#747677'});
});

// node editor frames
[[129,697,382,101],[282,818,206,93],[584,810,261,97],[476,939,230,75]].forEach(function (f) {
    add('frames', 'rect', {x: f[0], y: f[1], width: f[2], height: f[3], fill: '#0e0e0e'});
});

// links: x1, y1, x2, y2
function link(l, color, width, dash) {
    var m = (l[0] + l[2]) / 2;
    line('M' + l[0] + ' ' + l[1] + 'C' + m + ' ' + l[1] + ' ' + m + ' ' + l[3] + ' ' + l[2] + ' ' + l[3], color, width, dash);
}
function line(d, color, width, dash) {
    if (!dash) add('links', 'path', {d: d, stroke: '#0b0b0b', 'stroke-width': width + 1.5, 'stroke-opacity': 0.5});
    add('links', 'path', {d: d, stroke: color, 'stroke-width': width, 'stroke-dasharray': dash || 'none'});
}

var GREEN = '#1abf90', GREY = '#9c9c9c', PURPLE = '#6260b5', LILAC = '#b29cb6';

[[213,600,246,627],[265,616,318,645],[152,740,163,745],[180,750,202,758]].forEach(function (l) { link(l, GREY, 2.5); });
link([265,616,315,627], '#5b8a5b', 2);
line('M215 603L217 643M76 643H225M84 643L88 884M91 885L286 889', GREY, 2.8);
line('M221 747C230 750 226 808 239 809H386L390 854', GREY, 2.8);
line('M213 603C232 612 230 660 243 680M107 683L251 680M116 683L120 872M122 872L313 875', GREY, 1.8, '7 1');
line('M179 725L182 735', GREY, 2);
link([346,584,447,586], LILAC, 1.3);
link([346,585,418,599], LILAC, 1.3);
link([288,758,313,712], LILAC, 1.8);
link([638,887,665,878], LILAC, 1.8);
link([607,897,621,898], '#63a855', 1.5);

[[495,606,513,596],[467,609,476,613],[331,721,383,731],[340,731,363,740],[353,742,363,742],[303,774,334,750]].forEach(function (l) { link(l, PURPLE, 1.8); });
[[197,716,221,723],[409,846,434,838],[304,880,316,875]].forEach(function (l) { link(l, PURPLE, 3); });
line('M333 617C370 617 375 638 411 638C500 640 540 722 631 725', PURPLE, 1.6, '8 1');
line('M333 617C380 617 370 648 420 649S490 659 542 659C560 665 560 760 583 766', PURPLE, 1.6, '8 1');
line('M587 767C590 795 500 880 508 906M512 908V1001Q525 1004 534 1016', PURPLE, 1.8, '8 1');
line('M590 770C605 800 600 861 620 861S650 889 665 889', PURPLE, 1.6, '8 1');

[
    [213,597,246,599],[265,591,281,596],[300,592,329,591],[301,593,315,625],[346,582,447,582],
    [346,583,418,597],[435,593,447,593],[464,579,513,588],[464,593,513,594],[530,585,639,599],
    [530,595,639,599],[656,595,671,622],[660,627,671,625],[688,619,754,663],[771,660,908,681],
    [925,678,976,677],[555,646,608,751],[548,651,591,759],[608,751,705,822],[565,806,705,828],
    [637,842,665,875],[722,819,742,834],[759,827,781,845],[683,871,781,856],[719,882,781,858],
    [798,839,823,832],[798,843,823,835],[798,852,810,851],[331,706,426,722],[302,713,313,708],
    [239,716,252,724],[270,716,284,717],[443,719,489,738],[506,735,547,808],[451,832,466,830],
    [334,868,347,876],[364,868,376,869],[393,866,405,873],[360,895,405,874],[421,868,434,834],
    [624,952,652,968],[669,963,684,961],[575,1010,684,950],[533,890,608,956],[525,980,558,1013]
].forEach(function (l) { link(l, GREEN, 2.8); });
[
    'M333 608C370 608 370 617 410 617L447 620M467 624C490 630 505 633 540 633',
    'M333 608C375 610 370 628 410 630S510 646 555 646',
    'M333 609C375 611 370 631 412 633S510 651 548 651',
    'M608 751C620 755 600 785 575 820S528 880 533 890',
    'M591 759C602 765 585 790 560 825S508 887 517 897L520 899L525 980',
    'M591 759C615 770 612 840 633 841',
    'M572 808C600 820 605 851 630 851S650 880 665 880',
    'M483 826C540 830 550 960 608 962',
    'M484 827C505 840 500 985 520 990S545 1013 558 1015',
    'M829 847C862 847 855 780 875 735S895 686 908 683',
    'M840 826C862 820 857 790 878 730S895 684 908 683',
    'M702 951C750 900 770 850 790 800S845 686 908 683',
    'M702 948C770 935 785 850 810 790S860 688 908 684'
].forEach(function (d) { line(d, GREEN, 2.8); });

// nodes: x, y, width, height, header
var heads = {g: '#23694f', b: '#25607c', p: '#45418a', r: '#7c2f48', n: '#222'};
[
    [196,594,17,16,'n'],[247,588,18,19,'g'],[281,589,18,14,'g'],[329,578,16,21,'g'],[246,613,18,18,'b'],
    [316,605,17,23,'g'],[318,631,17,18,'b'],[418,589,17,25,'g'],[447,576,17,25,'g'],[449,605,17,21,'g'],
    [476,602,17,23,'p'],[513,581,17,17,'g'],[639,592,17,8,'g'],[671,615,17,14,'g'],[644,623,16,15,'g'],
    [754,657,17,14,'g'],[908,674,17,11,'g'],[976,673,17,8,'n'],[547,802,17,8,'g'],[705,815,17,41,'g'],
    [742,823,16,18,'g'],[781,839,17,35,'g'],[781,849,17,14,'g'],[810,844,17,35,'g'],[823,823,17,14,'g'],
    [639,841,17,5,'r'],[668,836,17,30,'b'],[665,868,17,33,'g'],[705,878,14,15,'g'],[589,894,17,5,'r'],
    [621,883,16,19,'b'],[608,949,16,41,'g'],[652,960,17,35,'g'],[684,944,17,35,'g'],[558,1007,16,10,'g'],
    [134,736,17,18,'b'],[163,731,17,18,'b'],[179,712,17,14,'b'],[221,713,17,22,'g'],[252,712,17,18,'g'],
    [284,710,17,14,'g'],[313,702,17,25,'g'],[202,744,17,18,'b'],[252,739,15,15,'g'],[271,755,17,11,'r'],
    [284,770,17,21,'b'],[334,739,17,23,'p'],[324,728,16,5,'r'],[329,763,16,30,'b'],[363,728,17,15,'p'],
    [389,747,17,13,'g'],[426,715,17,41,'g'],[489,731,17,14,'g'],[392,841,17,14,'b'],[434,828,17,33,'g'],
    [466,823,16,14,'g'],[287,875,16,14,'b'],[316,865,16,23,'g'],[347,865,17,18,'g'],[376,862,17,14,'g'],
    [405,865,17,14,'g'],[345,891,14,16,'g']
].forEach(function (n) {
    var x = n[0], y = n[1], w = n[2], h = n[3];
    add('node-list', 'rect', {x: x - 0.5, y: y - 0.5, width: w + 1, height: h + 1, fill: '#323232', stroke: '#0a0a0a'});
    add('node-list', 'rect', {x: x, y: y, width: w, height: 2, fill: heads[n[4]]});
    add('node-list', 'rect', {x: x + 3, y: y - 1, width: 1, height: 1, fill: '#ddd'});
    add('node-list', 'rect', {x: x + w - 3, y: y + 3, width: 2, height: 1, fill: '#bbb'});
    // sockets on top, value fields on the lower half
    for (var r = y + 5; r < y + h - 1; r += 3) {
        if (h > 16 && r > y + h / 2) add('node-list', 'rect', {x: x + 2, y: r, width: w - 4, height: 2, fill: '#555'});
        add('node-list', 'rect', {x: x + 1, y: r, width: 1, height: 1, fill: '#ccc'});
    }
});
```
